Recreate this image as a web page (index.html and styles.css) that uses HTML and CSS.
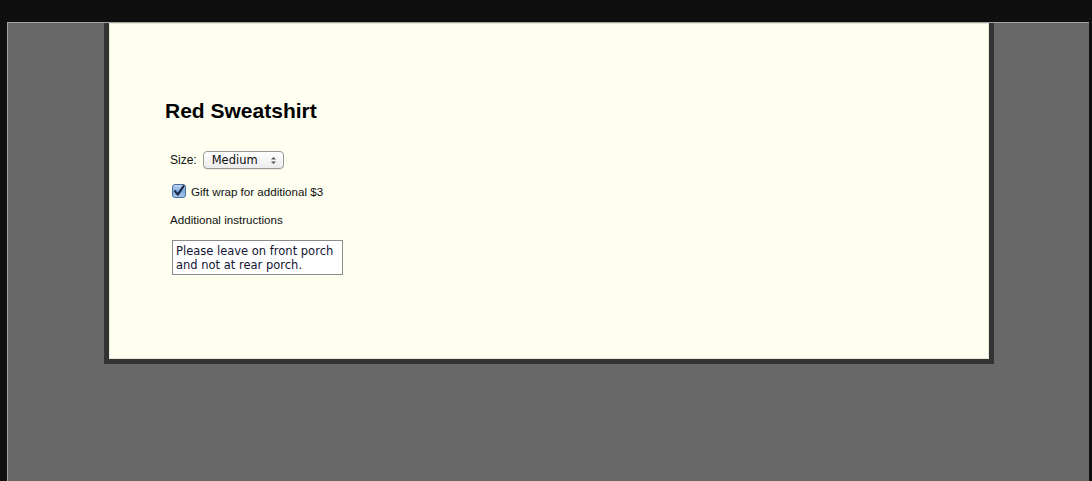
FILE: index.html
```html
<!DOCTYPE html>
<html>
<head>
<meta charset="utf-8">
<link rel="stylesheet" href="styles.css">
</head>
<body>
<div class="stage">
  <div class="paper">
    <h1 class="title">Red Sweatshirt</h1>
    <div class="form">
      <div class="row size-row">
        <span class="label">Size:</span>
        <span class="select">
          <span class="select-text">Medium</span>
          <svg class="arrows" width="7" height="9" viewBox="0 0 7 9"><path d="M1 3.5 L3.5 1 L6 3.5 Z M1 5.5 L3.5 8 L6 5.5 Z" fill="#555"/></svg>
        </span>
      </div>
      <div class="row check-row">
        <span class="checkbox">
          <svg width="14" height="14" viewBox="0 0 14 14">
            <defs>
              <linearGradient id="cb" x1="0" y1="0" x2="0" y2="1">
                <stop offset="0" stop-color="#c9dcf4"/>
                <stop offset="0.5" stop-color="#7fa9df"/>
                <stop offset="1" stop-color="#a9c9ef"/>
              </linearGradient>
            </defs>
            <rect x="0.5" y="0.5" width="13" height="13" rx="2.5" fill="url(#cb)" stroke="#4a6f9e"/>
            <path d="M3 7.2 L5.8 10.6 L11.6 2.2" fill="none" stroke="#1b2a44" stroke-width="2.1" stroke-linecap="round" stroke-linejoin="round"/>
          </svg>
        </span>
        <span class="check-label">Gift wrap for additional $3</span>
      </div>
      <div class="row instr-label">Additional instructions</div>
      <div class="textarea">Please leave on front porch<br>and not at rear porch.</div>
    </div>
  </div>
</div>
</body>
</html>
```
FILE: styles.css
```css
html, body {
  margin: 0;
  padding: 0;
  background: #0f0f0f;
  height: 481px;
  overflow: hidden;
}
body {
  font-family: "Liberation Sans", Arial, sans-serif;
}
.stage {
  margin: 22px 0 0 7px;
  width: 1082px;
  height: 459px;
  background: #686868;
  border-top: 1px solid #a4a4a4;
  border-left: 1px solid #a4a4a4;
  box-sizing: border-box;
}
.paper {
  margin-left: 96px;
  background: #fefff0;
  border: 5px solid #333333;
  border-top: 0;
  box-shadow: inset 0 0 0 1px #e8e8d8;
  padding: 76px 0 0 56px;
  box-sizing: content-box;
  width: 824px;
  height: 260px;
}
.title {
  margin: 0;
  font-size: 21px;
  line-height: 24px;
  font-weight: bold;
  color: #000;
}
.form {
  margin-left: 5px;
  display: flex;
  flex-direction: column;
  align-items: flex-start;
}
.row {
  display: flex;
  align-items: center;
}
.size-row {
  margin-top: 28px;
  height: 18px;
}
.label {
  font-size: 12px;
  color: #111;
}
.select {
  margin-left: 6px;
  width: 81px;
  height: 18px;
  box-sizing: border-box;
  border: 1px solid #9a9a9a;
  border-radius: 4px;
  background: linear-gradient(#ffffff, #ececec);
  display: flex;
  align-items: center;
  padding-left: 8px;
  padding-right: 6px;
  box-shadow: 0 1px 0 rgba(0,0,0,0.08);
}
.select-text {
  font-family: "DejaVu Sans", sans-serif;
  font-size: 11.5px;
  color: #111;
  flex: 1;
}
.arrows {
  display: block;
}
.check-row {
  margin-top: 15px;
  margin-left: 2px;
  height: 14px;
}
.checkbox {
  width: 14px;
  height: 14px;
  display: block;
}
.checkbox svg {
  display: block;
}
.check-label {
  margin-left: 5px;
  font-size: 11.6px;
  color: #111;
}
.instr-label {
  margin-top: 15px;
  font-size: 11.6px;
  line-height: 13px;
  color: #111;
}
.textarea {
  margin-top: 14px;
  margin-left: 2px;
  width: 171px;
  height: 35px;
  box-sizing: border-box;
  border: 1px solid #8c8c8c;
  background: #fff;
  padding: 4px 3px 0;
  font-family: "DejaVu Sans", sans-serif;
  font-size: 11.5px;
  line-height: 13.5px;
  color: #141433;
  white-space: nowrap;
}
```
